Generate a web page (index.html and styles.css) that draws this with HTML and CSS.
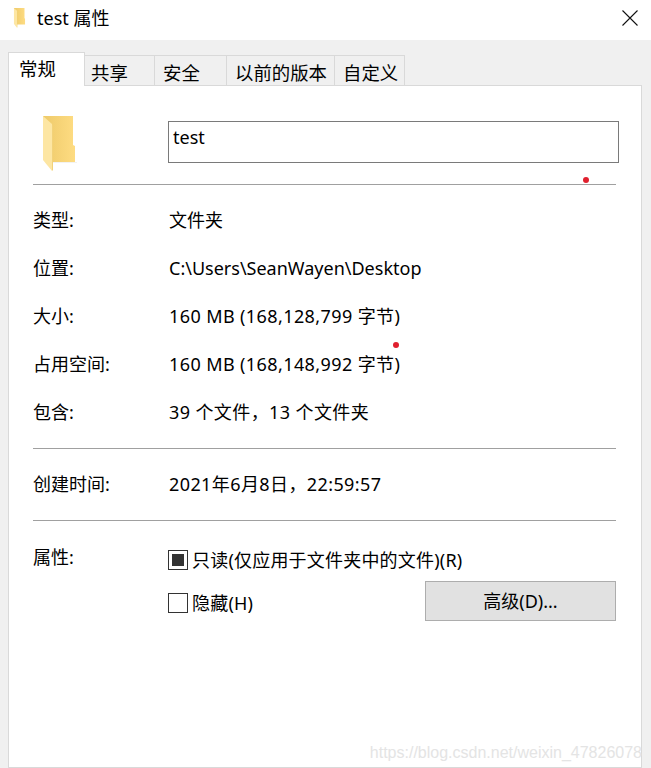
FILE: index.html
```html
<!DOCTYPE html>
<html lang="zh-CN">
<head>
<meta charset="utf-8">
<title>test 属性</title>
<link rel="stylesheet" href="styles.css">
</head>
<body>
<div class="dialog">
  <header class="titlebar">
    <svg class="title-icon" width="15" height="20" viewBox="0 0 32 56"><use href="#folder" width="32" height="56"/></svg>
    <span class="title-text">test 属性</span>
    <svg class="close" width="16" height="16" viewBox="0 0 16 16"><path d="M.5.5l15 15M15.5.5l-15 15" stroke="#111" stroke-width="1.1" fill="none"/></svg>
  </header>
  <main class="body">
    <nav class="tabs">
      <div class="tab active t1">常规</div>
      <div class="tab t2">共享</div>
      <div class="tab t3">安全</div>
      <div class="tab t4">以前的版本</div>
      <div class="tab t5">自定义</div>
    </nav>
    <section class="panel">
      <div class="name-row">
        <svg class="big-icon" width="34" height="56" viewBox="0 0 34 56">
          <defs>
            <linearGradient id="back" x1="0" x2="1" y1="0" y2="0">
              <stop offset="0" stop-color="#eeca6a"/>
              <stop offset="1" stop-color="#fedc82"/>
            </linearGradient>
            <symbol id="folder" viewBox="0 0 32 56">
              <path d="M0 0H30V29L32 30V46H9z" fill="url(#back)"/>
              <path d="M0 0L9 8V55L0 44z" fill="#fde6a3"/>
              <path d="M9 8V55L10 54V9z" fill="#f2d27a"/>
            </symbol>
          </defs>
          <path d="M10 46H34V47H10z" fill="#f2f2f2"/>
          <use href="#folder" width="32" height="56"/>
        </svg>
        <div class="name-box">test</div>
      </div>
      <hr class="rule first">
      <dl class="info">
        <div class="row"><dt>类型:</dt><dd>文件夹</dd></div>
        <div class="row"><dt>位置:</dt><dd>C:\Users\SeanWayen\Desktop</dd></div>
        <div class="row"><dt>大小:</dt><dd class="num">160 MB (168,128,799 字节)</dd></div>
        <div class="row"><dt>占用空间:</dt><dd class="num">160 MB (168,148,992 字节)</dd></div>
        <div class="row"><dt>包含:</dt><dd class="num">39 个文件，13 个文件夹</dd></div>
      </dl>
      <hr class="rule">
      <div class="row created"><span class="label">创建时间:</span><span class="num">2021年6月8日，22:59:57</span></div>
      <hr class="rule">
      <div class="attrs">
        <span class="label attr-label">属性:</span>
        <div class="attr-body">
          <div class="check-row"><span class="check checked"></span><span class="check-text">只读(仅应用于文件夹中的文件)(R)</span></div>
          <div class="check-row second">
            <span class="check"></span><span class="check-text">隐藏(H)</span>
            <button class="adv" type="button">高级(D)...</button>
          </div>
        </div>
      </div>
    </section>
    <i class="dot d1"></i>
    <i class="dot d2"></i>
    <span class="watermark">https://blog.csdn.net/weixin_47826078</span>
  </main>
</div>
</body>
</html>
```
FILE: styles.css
```css
* { box-sizing: border-box; }
html, body { margin: 0; height: 100%; }
body {
  background: #f0f0f0;
  color: #000;
  font: 18px/24px "Noto Sans", "Noto Sans CJK SC", sans-serif;
  overflow: hidden;
}
.dialog { display: flex; flex-direction: column; height: 768px; }
.titlebar {
  flex: 0 0 40px;
  background: #fff;
  display: flex;
  align-items: center;
  padding: 0 13px 4px 12px;
}
.title-icon { flex: none; margin-right: 10px; }
.title-text { flex: 1; font-size: 18px; }
.close { flex: none; }
.body { position: relative; flex: 1; padding: 12px 9px 0 8px; display: flex; flex-direction: column; }
.tabs { display: flex; align-items: flex-end; height: 34px; position: relative; z-index: 1; }
.tab {
  height: 31px;
  background: #f0f0f0;
  border: 1px solid #d9d9d9;
  border-left: 0;
  padding: 4px 0 0 6px;
  font-size: 18.400px;
  line-height: 26px;
  white-space: nowrap;
}
.tab.active {
  height: 34px;
  background: #fff;
  border: 1px solid #d9d9d9;
  border-bottom: 0;
  padding: 3px 0 0 10px;
}
.t1 { width: 77px; }
.t2 { width: 70px; }
.t3 { width: 72px; padding-left: 8px; }
.t4 { width: 108px; padding-left: 8px; }
.t5 { width: 70px; padding-left: 8px; }
.panel {
  flex: 1;
  background: #fff;
  border: 1px solid #d9d9d9;
  margin-top: -1px;
  padding: 0 25px 0 24px;
}
.name-row { display: flex; height: 98px; }
.big-icon { flex: none; margin: 30px 0 0 10px; }
.name-box {
  width: 451px;
  height: 42px;
  margin: 35px 0 0 91px;
  border: 1px solid #7a7a7a;
  padding: 3px 4px;
  flex: none;
}
.rule { height: 1px; margin: 0; border: 0; background: #a0a0a0; }
.info { margin: 0; padding: 11px 0 12px; }
.row { display: flex; height: 48px; align-items: center; }
.row dt, .label { flex: 0 0 136px; }
.row dt { margin: 0; }
.row dd { margin: 0; }
.num { letter-spacing: 0.400px; }
.created { height: 71px; padding-bottom: 2px; }
.attrs { display: flex; padding-top: 27px; }
.attr-label { flex-basis: 135px; line-height: 24px; margin-top: -3px; }
.attr-body { flex: 1; }
.check-row { display: flex; align-items: center; height: 24px; }
.check-row.second { position: relative; margin-top: 19px; }
.check {
  width: 20px;
  height: 20px;
  border: 1px solid #333;
  margin-right: 4px;
  display: block;
  flex: none;
}
.check.checked { padding: 3px; background: #333 content-box; }
.check-text { letter-spacing: 0.200px; }
.adv {
  position: absolute;
  right: 0;
  top: -10px;
  width: 191px;
  height: 40px;
  background: #e1e1e1;
  border: 1px solid #adadad;
  font: inherit;
  color: inherit;
  padding: 0;
}
.dot { position: absolute; width: 6px; height: 6px; border-radius: 50%; background: #e0202e; }
.d1 { left: 583px; top: 137px; }
.d2 { left: 393px; top: 302px; }
.watermark {
  position: absolute;
  right: 9px;
  bottom: 5px;
  font: 16px/20px "Liberation Sans", sans-serif;
  color: #e4e4e4;
}
```
